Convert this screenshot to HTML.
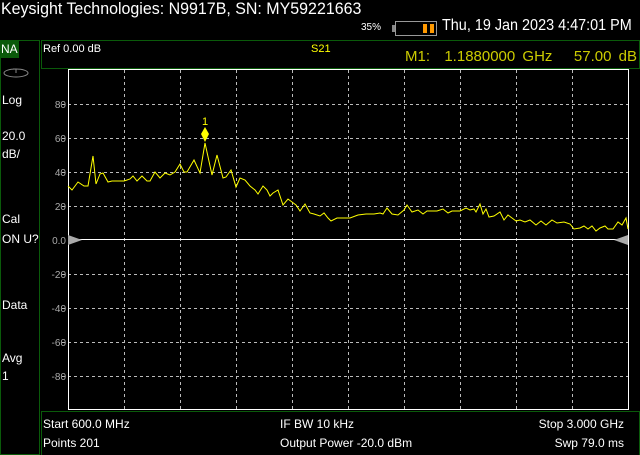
<!DOCTYPE html>
<html><head><style>
body{margin:0;width:640px;height:454px;background:#000;overflow:hidden;position:relative;font-family:"Liberation Sans",sans-serif;color:#fff}
.a{position:absolute;white-space:nowrap}
</style></head><body>
<div class="a" style="left:1px;top:-1px;font-size:17px;transform:scaleX(0.94);transform-origin:0 0">Keysight Technologies: N9917B, SN: MY59221663</div>
<div class="a" style="left:361px;top:22px;font-size:10px">35%</div>
<div class="a" style="left:392px;top:25px;width:3px;height:7px;background:#888"></div>
<div class="a" style="left:395px;top:21px;width:40px;height:13px;border:1px solid #999"></div>
<div class="a" style="left:423px;top:24px;width:4px;height:9px;background:#f90"></div>
<div class="a" style="left:430px;top:24px;width:4px;height:9px;background:#f90"></div>
<div class="a" style="left:442px;top:17px;font-size:16px;transform:scaleX(0.9);transform-origin:0 0">Thu, 19 Jan 2023 4:47:01 PM</div>
<div class="a" style="left:0;top:40px;width:38px;height:413px;border:1px solid #0a5a0a"></div>
<div class="a" style="left:1px;top:41px;width:18px;height:17px;background:#0a5a0a;font-size:12px;line-height:17px">NA</div>
<svg class="a" style="left:3px;top:66px" width="28" height="14"><ellipse cx="13" cy="7" rx="12" ry="4" fill="none" stroke="#888"/><path d="M13 3v4M10 3l3 0" stroke="#888"/></svg>
<div class="a" style="left:2px;top:91px;font-size:12px;line-height:18px">Log<br><br>20.0<br>dB/</div>
<div class="a" style="left:2px;top:209px;font-size:12px;line-height:20px">Cal<br>ON U?</div>
<div class="a" style="left:2px;top:298px;font-size:12px">Data</div>
<div class="a" style="left:2px;top:349px;font-size:12px;line-height:18px">Avg<br>1</div>
<div class="a" style="left:41px;top:40px;width:597px;height:27px;border:1px solid #0a5a0a"></div>
<div class="a" style="left:43px;top:43px;font-size:11px">Ref 0.00 dB</div>
<div class="a" style="left:311px;top:43px;font-size:11px;color:#ff0">S21</div>
<div class="a" style="left:405px;top:48px;font-size:15px;color:#cc0;word-spacing:3px">M1:&nbsp; 1.1880000 GHz &nbsp; 57.00 dB</div>
<div class="a" style="left:41px;top:411px;width:597px;height:43px;border:1px solid #0a5a0a;border-bottom:none"></div>
<div class="a" style="left:43px;top:415px;font-size:12px;line-height:19px">Start 600.0 MHz<br>Points 201</div>
<div class="a" style="left:280px;top:415px;font-size:12px;line-height:19px">IF BW 10 kHz<br>Output Power -20.0 dBm</div>
<div class="a" style="right:16px;top:415px;font-size:12px;line-height:19px;text-align:right">Stop 3.000 GHz<br>Swp 79.0 ms</div>
<svg class="a" style="left:0;top:0" width="640" height="454">
<g stroke="#bbb" stroke-dasharray="3,3" stroke-width="1">
<path d="M124.5 70V409M180.5 70V409M236.5 70V409M292.5 70V409M348.5 70V409M404.5 70V409M460.5 70V409M516.5 70V409M572.5 70V409"/>
<path d="M62 104.5H628M62 138.5H628M62 172.5H628M62 206.5H628M62 274.5H628M62 308.5H628M62 342.5H628M62 376.5H628"/>
</g>
<rect x="68.5" y="69.5" width="560" height="340" fill="none" stroke="#fff"/>
<path d="M68 239.5H628" stroke="#fff"/>
<path d="M68 235L82 240L68 245Z" fill="#aaa"/><path d="M628 235L614 240L628 245Z" fill="#aaa"/>
<g font-size="10" fill="#aaa" text-anchor="end"><text x="66" y="108">80</text><text x="66" y="142">60</text><text x="66" y="176">40</text><text x="66" y="210">20</text><text x="66" y="244">0.0</text><text x="66" y="278">-20</text><text x="66" y="312">-40</text><text x="66" y="346">-60</text><text x="66" y="380">-80</text></g>
<polyline fill="none" stroke="#ff0" stroke-width="1" points="68,186 72,190 78,182 84,186 88,186 93,156 96,184 100,174 103,173 108,182 112,181 120,181 124,181 130,179 133,176 137,181 142,176 147,181 150,181 155,172 160,178 165,173 170,175 175,172 180,164 184,172 187,172 194,160 200,173 205,143 212,175 217,155 223,178 226,177 231,170 236,187 240,178 245,180 250,186 255,190 258,194 263,186 267,190 270,196 273,193 278,190 283,205 288,199 292,202 296,205 300,211 305,204 310,213 314,214 320,216 324,213 328,218 331,221 337,218 341,218 350,218 358,215 366,214 374,214 380,213 383,214 387,208 392,214 398,215 404,210 407,205 412,212 418,210 423,214 427,211 437,211 443,209 448,213 452,211 460,211 466,208 470,210 474,209 476,212 480,204 483,214 486,209 489,217 494,216 500,212 504,220 508,215 512,218 516,221 520,220 525,222 530,220 536,225 541,221 546,225 552,220 557,223 564,222 570,224 574,229 580,228 584,226 588,229 592,226 596,231 600,228 605,226 608,229 613,229 618,222 622,225 626,218 628,229"/>
<path d="M205 127L209 134L205 142L201 134Z" fill="#ff0"/>
<text x="205" y="125" font-size="11" fill="#ff0" text-anchor="middle">1</text>
</svg>
</body></html>
